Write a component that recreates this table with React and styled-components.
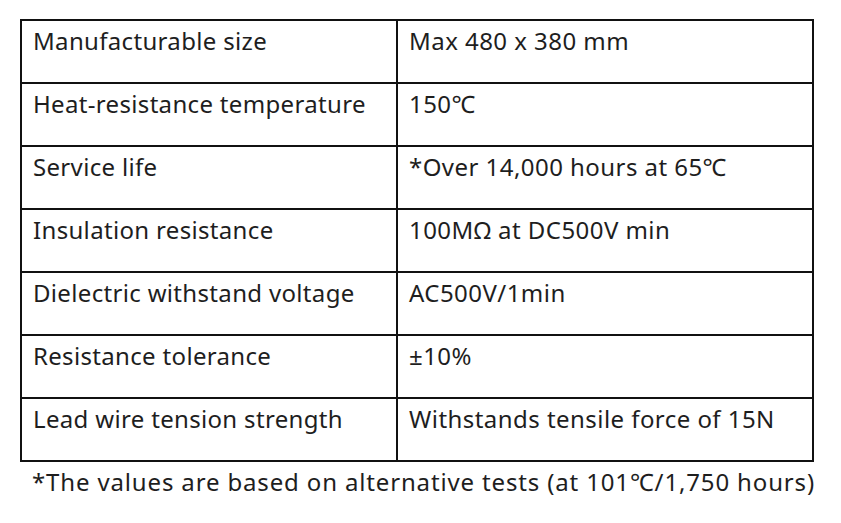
import React from "react";
import styled, { createGlobalStyle } from "styled-components";

const Global = createGlobalStyle`
  html, body { margin: 0; padding: 0; background: #fff; }
  body { font-family: "Noto Sans", "Noto Sans CJK JP", sans-serif; color: #1e1e1e; }
`;

const Page = styled.div`
  padding: 19px 0 0 20px;
  width: 841px;
  box-sizing: border-box;
`;

const Table = styled.table`
  border-collapse: collapse;
  width: 794px;
  table-layout: fixed;
  border: 2px solid #111;
`;

const Cell = styled.td`
  border: 2px solid #111;
  height: 63px;
  box-sizing: border-box;
  padding: 4px 0 0 11px;
  vertical-align: top;
  font-size: 24px;
  line-height: 32px;
  letter-spacing: ${p => (p.$value ? "0.45px" : "0.33px")};
  white-space: nowrap;
  width: ${p => (p.$value ? "auto" : "376px")};
`;

const Note = styled.p`
  margin: 4px 0 0 12px;
  font-size: 24px;
  line-height: 32px;
  letter-spacing: 0.85px;
  white-space: nowrap;
`;

const rows = [
  ["Manufacturable size", "Max 480 x 380 mm"],
  ["Heat-resistance temperature", "150℃"],
  ["Service life", "*Over 14,000 hours at 65℃"],
  ["Insulation resistance", "100MΩ at DC500V min"],
  ["Dielectric withstand voltage", "AC500V/1min"],
  ["Resistance tolerance", "±10%"],
  ["Lead wire tension strength", "Withstands tensile force of 15N"],
];

export default function App() {
  return (
    <Page>
      <Global />
      <Table>
        <tbody>
          {rows.map(([k, v]) => (
            <tr key={k}>
              <Cell>{k}</Cell>
              <Cell $value>{v}</Cell>
            </tr>
          ))}
        </tbody>
      </Table>
      <Note>*The values are based on alternative tests (at 101℃/1,750 hours)</Note>
    </Page>
  );
}
